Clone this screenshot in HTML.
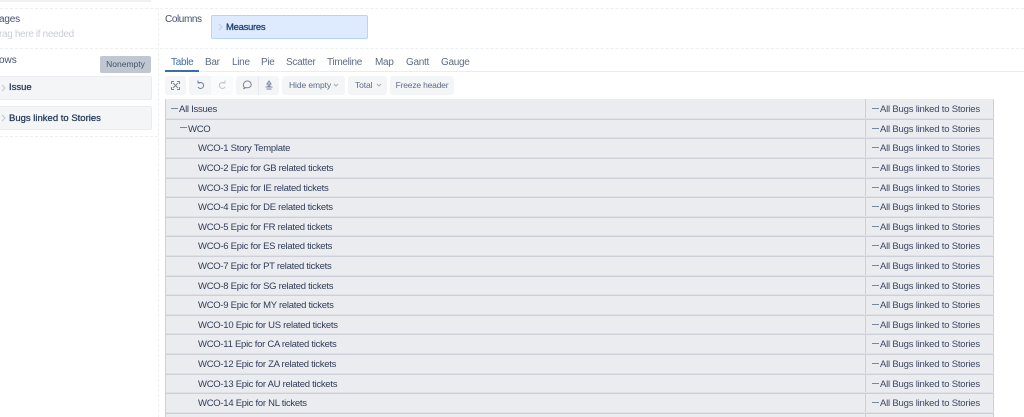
<!DOCTYPE html>
<html><head><meta charset="utf-8"><style>
html,body{margin:0;padding:0;background:#fff;overflow:hidden}
body{width:1024px;height:417px;position:relative;font-family:"Liberation Sans",sans-serif;font-size:9.5px;color:#42526e}
.a{position:absolute;white-space:nowrap}
.r{position:absolute;left:165px;width:829px;height:20px;box-sizing:border-box;background:#ebecf0;border-top:1px solid #cdd0d8;box-shadow:0 -1px 0 #dfe1e6}
.r .n{position:absolute;left:33px;top:4px;color:#2f3c56;font-size:9.5px;letter-spacing:-.27px;white-space:nowrap}
.r .c{position:absolute;left:700px;top:-1px;height:20px;width:127px;border-left:1px solid #cdd0d8;border-right:1px solid #cdd0d8;color:#3b4760}
.r .c span{position:absolute;left:14px;top:5px;letter-spacing:-.2px;white-space:nowrap}
.r .c i{position:absolute;left:6px;top:9px;width:7px;height:1px;background:#7a869a}
.m{position:absolute;height:1px;width:7px;background:#7a869a}
.tab{position:absolute;top:57px;color:#5e6c84;font-size:10px;letter-spacing:-.3px;white-space:nowrap}
.b{position:absolute;top:76px;height:19px;background:#f4f5f7;border-radius:3px;color:#5e6c84;font-size:8.5px;letter-spacing:-.1px;line-height:19px;text-align:center;white-space:nowrap}
.d{position:absolute}
.s{font-size:9.5px;color:#253858;-webkit-text-stroke:.25px #253858}
</style></head><body>
<div class="d" style="left:0;top:0;width:151px;height:2px;background:#f0f1f4"></div>
<div class="d" style="left:0;top:8px;width:1024px;border-top:1px dashed #eceef1"></div>
<div class="d" style="left:0;top:48px;width:1024px;border-top:1px dashed #eceef1"></div>
<div class="d" style="left:0;top:136px;width:158px;border-top:1px dashed #eceef1"></div>
<div class="d" style="left:158px;top:8px;height:409px;border-left:1px dashed #eceef1"></div>

<div class="a" style="left:-1px;top:14px;font-size:10px;letter-spacing:-.2px;color:#42526e">ages</div>
<div class="a" style="left:-1px;top:29px;font-size:10px;letter-spacing:-.35px;color:#c9ced6">rag here if needed</div>
<div class="a" style="left:-1px;top:55px;font-size:10px;color:#42526e">ows</div>
<div class="a" style="left:100px;top:56px;width:51px;height:17px;background:#c1c7d0;border-radius:2px;color:#42526e;font-size:8.5px;line-height:17px;text-align:center">Nonempty</div>

<div class="a" style="left:-4px;top:76px;width:154px;height:22px;background:#f4f5f7;border:1px solid #ebecf0;border-radius:2px"></div>
<svg class="a" style="left:1px;top:84px" width="5" height="8"><path d="M1 1l3 3-3 3" fill="none" stroke="#c1c7d0"/></svg>
<div class="a s" style="left:9px;top:82px">Issue</div>
<div class="a" style="left:-4px;top:106px;width:154px;height:22px;background:#f4f5f7;border:1px solid #ebecf0;border-radius:2px"></div>
<svg class="a" style="left:1px;top:114px" width="5" height="8"><path d="M1 1l3 3-3 3" fill="none" stroke="#c1c7d0"/></svg>
<div class="a s" style="left:9px;top:113px">Bugs linked to Stories</div>

<div class="a" style="left:165px;top:14px;font-size:10px;letter-spacing:-.4px;color:#42526e">Columns</div>
<div class="a" style="left:211px;top:15px;width:155px;height:22px;background:#deebff;border:1px solid #b3d4ff;border-radius:2px"></div>
<svg class="a" style="left:218px;top:23px" width="5" height="8"><path d="M1 1l3 3-3 3" fill="none" stroke="#b3cdf2"/></svg>
<div class="a s" style="left:226px;top:22px;letter-spacing:-.3px;color:#1f3a70;-webkit-text-stroke-color:#1f3a70">Measures</div>

<div class="tab" style="left:171px;color:#3b6ea8">Table</div>
<div class="tab" style="left:205px">Bar</div>
<div class="tab" style="left:232px">Line</div>
<div class="tab" style="left:261px">Pie</div>
<div class="tab" style="left:286px">Scatter</div>
<div class="tab" style="left:327px">Timeline</div>
<div class="tab" style="left:375px">Map</div>
<div class="tab" style="left:406px">Gantt</div>
<div class="tab" style="left:441px">Gauge</div>
<div class="d" style="left:165px;top:71px;width:859px;height:1px;background:#ebecf0"></div>
<div class="d" style="left:165px;top:70px;width:34px;height:2px;background:#3b6ea8"></div>

<div class="b" style="left:165px;width:21px"></div>
<svg class="a" style="left:171px;top:81px" width="9" height="9"><path d="M2 2l5 5M7 2L2 7" fill="none" stroke="#7a869a"/><path d="M0 0h3v1H1v2H0zM9 0H6v1h2v2h1zM0 9h3V8H1V6H0zM9 9H6V8h2V6h1z" fill="#7a869a"/></svg>
<div class="b" style="left:189px;width:44px"></div>
<div class="d" style="left:211px;top:76px;width:22px;height:19px;background:#fafbfc;border-radius:0 3px 3px 0"></div>
<svg class="a" style="left:195px;top:80px" width="11" height="10"><path d="M3 2.500h3a3 3 0 1 1-3 4.500M3 .5v2.500h2.500" fill="none" stroke="#7a869a"/></svg>
<svg class="a" style="left:217px;top:80px" width="11" height="10"><path d="M8 2.500H5a3 3 0 1 0 3 4.500M8 .5v2.500H5.500" fill="none" stroke="#c1c7d0"/></svg>
<div class="b" style="left:236px;width:43px"></div>
<div class="d" style="left:258px;top:76px;width:1px;height:19px;background:#e8e9ed"></div>
<svg class="a" style="left:242px;top:80px" width="11" height="10"><path d="M2.500 7.500C0 5 2 1 5.500 1S10 5 8.500 6.500 5 8 4 7.500L1.500 9z" fill="none" stroke="#7a869a"/></svg>
<svg class="a" style="left:264px;top:80px" width="10" height="10"><path d="M5 1L3 4h1.200v2h1.600V4H7zM1.500 7h7M2.500 9h5" fill="none" stroke="#7a869a"/></svg>
<div class="b" style="left:282px;width:63px;text-align:left;text-indent:7px">Hide empty</div>
<svg class="a" style="left:333px;top:83px" width="6" height="4"><path d="M1 1l2 2 2-2" fill="none" stroke="#a5adba"/></svg>
<div class="b" style="left:348px;width:39px;text-align:left;text-indent:7px">Total</div>
<svg class="a" style="left:376px;top:83px" width="6" height="4"><path d="M1 1l2 2 2-2" fill="none" stroke="#a5adba"/></svg>
<div class="b" style="left:390px;width:64px;letter-spacing:-.2px">Freeze header</div>

<div class="r" style="top:99px;border-top-color:#ebecf0;box-shadow:none"><span class="n" style="left:14px">All Issues</span><i class="m" style="left:6px;top:8px"></i><div class="c"><i></i><span>All Bugs linked to Stories</span></div></div>
<div class="r" style="top:119px"><span class="n" style="left:23px">WCO</span><i class="m" style="left:15px;top:7px"></i><div class="c"><i></i><span>All Bugs linked to Stories</span></div></div>
<div class="r" style="top:138px"><span class="n">WCO-1 Story Template</span><div class="c"><i></i><span>All Bugs linked to Stories</span></div></div>
<div class="r" style="top:158px"><span class="n">WCO-2 Epic for GB related tickets</span><div class="c"><i></i><span>All Bugs linked to Stories</span></div></div>
<div class="r" style="top:178px"><span class="n">WCO-3 Epic for IE related tickets</span><div class="c"><i></i><span>All Bugs linked to Stories</span></div></div>
<div class="r" style="top:197px"><span class="n">WCO-4 Epic for DE related tickets</span><div class="c"><i></i><span>All Bugs linked to Stories</span></div></div>
<div class="r" style="top:217px"><span class="n">WCO-5 Epic for FR related tickets</span><div class="c"><i></i><span>All Bugs linked to Stories</span></div></div>
<div class="r" style="top:236px"><span class="n">WCO-6 Epic for ES related tickets</span><div class="c"><i></i><span>All Bugs linked to Stories</span></div></div>
<div class="r" style="top:256px"><span class="n">WCO-7 Epic for PT related tickets</span><div class="c"><i></i><span>All Bugs linked to Stories</span></div></div>
<div class="r" style="top:276px"><span class="n">WCO-8 Epic for SG related tickets</span><div class="c"><i></i><span>All Bugs linked to Stories</span></div></div>
<div class="r" style="top:295px"><span class="n">WCO-9 Epic for MY related tickets</span><div class="c"><i></i><span>All Bugs linked to Stories</span></div></div>
<div class="r" style="top:315px"><span class="n">WCO-10 Epic for US related tickets</span><div class="c"><i></i><span>All Bugs linked to Stories</span></div></div>
<div class="r" style="top:334px"><span class="n">WCO-11 Epic for CA related tickets</span><div class="c"><i></i><span>All Bugs linked to Stories</span></div></div>
<div class="r" style="top:354px"><span class="n">WCO-12 Epic for ZA related tickets</span><div class="c"><i></i><span>All Bugs linked to Stories</span></div></div>
<div class="r" style="top:374px"><span class="n">WCO-13 Epic for AU related tickets</span><div class="c"><i></i><span>All Bugs linked to Stories</span></div></div>
<div class="r" style="top:393px"><span class="n">WCO-14 Epic for NL tickets</span><div class="c"><i></i><span>All Bugs linked to Stories</span></div></div>
<div class="r" style="top:413px"><div class="c"></div></div>
<div class="d" style="left:165px;top:99px;width:1px;height:318px;background:#cdd0d8"></div>
</body></html>
